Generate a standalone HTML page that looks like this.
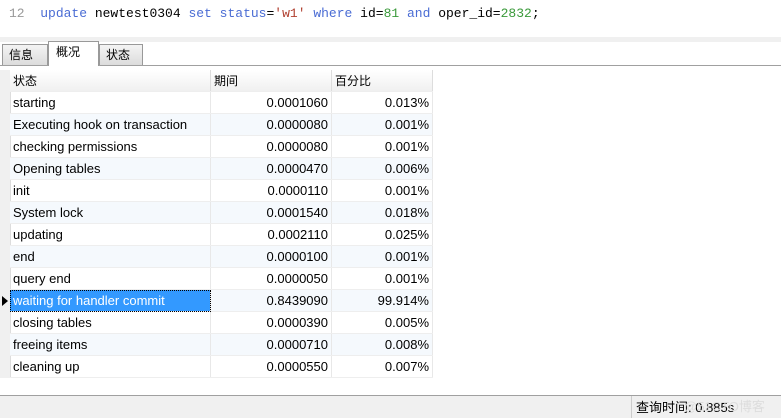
<!DOCTYPE html>
<html><head><meta charset="utf-8"><style>
body{margin:0;width:781px;height:417px;background:#fff;position:relative;overflow:hidden;font-family:"Liberation Sans","Noto Sans CJK SC",sans-serif;font-size:13px;color:#000}
.code{position:absolute;top:6px;left:9px;font-family:"Liberation Mono",monospace;font-size:13px;white-space:pre}
.band{position:absolute;top:37px;left:0;width:781px;height:5px;background:#f0f0f0}
.tab{position:absolute;border:1px solid #999;border-bottom:none;background:linear-gradient(#f4f4f4,#dcdcdc);font-size:12px;line-height:20px;padding-left:6px;box-sizing:border-box}
.tabline{position:absolute;top:65px;left:0;width:781px;height:1px;background:#a0a0a0}
.gut{position:absolute;left:0;top:70px;width:10px;height:308px;background:#f0f0f0;border-right:1px solid #ddd}
table{position:absolute;left:10px;top:70px;border-collapse:collapse;width:423px}
td{height:20px;padding:1px 3px 0;border-right:1px solid #e8e8e8;border-bottom:1px solid #eee;white-space:nowrap;font-size:13px;line-height:20px}
tr.h td{background:linear-gradient(#fff,#f0f0f0);height:19px;font-size:12px;border-right:1px solid #ddd;padding-top:2px;line-height:19px}
tr.a td{background:#f5f9fd}
td.n{text-align:right}
tr td.sel{background:#3399ff;color:#fff;outline:1px dotted #000;outline-offset:-1px}
.sb{position:absolute;left:0;top:395px;width:781px;height:22px;background:#f0f0f0;border-top:1px solid #a0a0a0}
</style></head><body>
<div class="code"><span style="color:#999">12</span>  <span style="color:#4a6cd4">update</span> newtest0304 <span style="color:#4a6cd4">set</span> <span style="color:#4a6cd4">status</span>=<span style="color:#b04030">'w1'</span> <span style="color:#4a6cd4">where</span> id=<span style="color:#3a9a3a">81</span> <span style="color:#4a6cd4">and</span> oper_id=<span style="color:#3a9a3a">2832</span>;</div>
<div class="band"></div>
<div class="tabline"></div>
<div class="tab" style="left:2px;top:44px;width:46px;height:21px">信息</div>
<div class="tab" style="left:99px;top:44px;width:44px;height:21px">状态</div>
<div class="tab" style="left:48px;top:41px;width:51px;height:25px;background:#fff;padding-left:7px">概况</div>
<div class="gut"></div>
<div style="position:absolute;left:2px;top:296px;width:0;height:0;border-top:5px solid transparent;border-bottom:5px solid transparent;border-left:6px solid #000"></div>
<table>
<tr class="h"><td style="width:194px">状态</td><td style="width:114px">期间</td><td>百分比</td></tr>
<tr><td>starting</td><td class="n">0.0001060</td><td class="n">0.013%</td></tr>
<tr class="a"><td>Executing hook on transaction</td><td class="n">0.0000080</td><td class="n">0.001%</td></tr>
<tr><td>checking permissions</td><td class="n">0.0000080</td><td class="n">0.001%</td></tr>
<tr class="a"><td>Opening tables</td><td class="n">0.0000470</td><td class="n">0.006%</td></tr>
<tr><td>init</td><td class="n">0.0000110</td><td class="n">0.001%</td></tr>
<tr class="a"><td>System lock</td><td class="n">0.0001540</td><td class="n">0.018%</td></tr>
<tr><td>updating</td><td class="n">0.0002110</td><td class="n">0.025%</td></tr>
<tr class="a"><td>end</td><td class="n">0.0000100</td><td class="n">0.001%</td></tr>
<tr><td>query end</td><td class="n">0.0000050</td><td class="n">0.001%</td></tr>
<tr class="a"><td class="sel">waiting for handler commit</td><td class="n">0.8439090</td><td class="n">99.914%</td></tr>
<tr><td>closing tables</td><td class="n">0.0000390</td><td class="n">0.005%</td></tr>
<tr class="a"><td>freeing items</td><td class="n">0.0000710</td><td class="n">0.008%</td></tr>
<tr><td>cleaning up</td><td class="n">0.0000550</td><td class="n">0.007%</td></tr>
</table>
<div class="sb"><div style="position:absolute;left:631px;top:0;height:22px;border-left:1px solid #ccc;padding-left:4px;line-height:24px;font-size:13px">查询时间: 0.885s</div><div style="position:absolute;left:684px;top:0;line-height:22px;color:#ddd;font-size:13px">@51CTO博客</div></div>
</body></html>
